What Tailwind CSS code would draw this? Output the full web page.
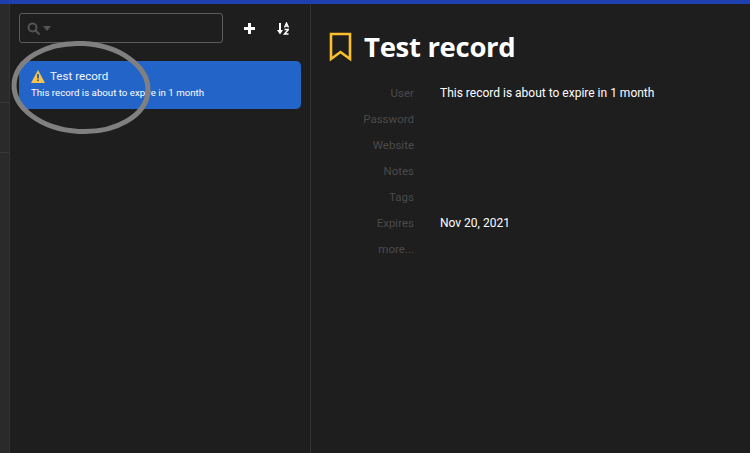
<!DOCTYPE html>
<html lang="en">
<head>
  <meta charset="UTF-8"/>
  <title>Test record</title>
  <script src="https://cdn.jsdelivr.net/npm/@tailwindcss/browser@4"></script>
</head>
<body class="w-[750px] h-[453px] overflow-hidden bg-[#1e1e1e] font-['Roboto',sans-serif] text-white relative">
  <div class="h-1 bg-[#1e40af]"></div>
  <div class="flex h-[449px]">
    <!-- left rail -->
    <div class="w-[10px] shrink-0 bg-[#2a2a2a] border-r border-[#333] flex flex-col">
      <div class="h-[50px] mt-[49px] border-b border-[#383838]"></div>
      <div class="h-[50px] border-b border-[#383838]"></div>
    </div>
    <!-- list column -->
    <div class="w-[301px] shrink-0 border-r border-[#333] pl-[9px] pr-[9px] pt-[9px]">
      <div class="flex items-center">
        <div class="w-[204px] h-[30px] rounded-[3px] border border-[#5c5c5c] flex items-center pl-[7px] gap-[3px]">
          <svg class="w-[13px] h-[13px] text-[#555]" viewBox="0 0 13 13" fill="none" stroke="currentColor" stroke-width="2"><circle cx="5.5" cy="5.5" r="4"/><path d="M8.5 8.5l4 4"/></svg>
          <svg class="w-[8px] h-[5px] text-[#555]" viewBox="0 0 8 5" fill="currentColor"><path d="M0 0h8L4 5z"/></svg>
        </div>
        <svg class="ml-[20px] w-[13px] h-[13px]" viewBox="0 0 13 13" fill="white"><path d="M5 1h3v4h4v3H8v4H5V8H1V5h4z"/></svg>
        <div class="ml-[21px] flex items-center">
          <svg class="w-[12px] h-[13px]" viewBox="0 0 12 13" fill="none" stroke="white"><path d="M3 1v9" stroke-width="2"/><path d="M0 8l3 4.500L6 8z" fill="white" stroke="none"/><path d="M7.500 5.500L9.500 1l2 4.500M8.300 4h2.400" stroke-width="1.300"/><path d="M7.500 7.500h4l-4 4.500h4" stroke-width="1.500"/></svg>
        </div>
      </div>
      <div class="mt-[18px] h-[48px] rounded-[5px] bg-[#2364c8] pl-[12px] pt-[7px]">
        <div class="flex items-center gap-[5px] h-[17px]">
          <svg class="w-[14px] h-[13px]" viewBox="0 0 14 13"><path d="M7 0L14 13H0z" fill="#f6c350"/><path d="M6.200 4h1.600v4.500H6.200zM6.200 9.500h1.600v1.600H6.200z" fill="#1d4f9c"/></svg>
          <span class="text-[11.6px] leading-[17px] text-[#f2f5fb]">Test record</span>
        </div>
        <div class="text-[9.7px] leading-[15px] text-white whitespace-nowrap">This record is about to expire in 1 month</div>
      </div>
    </div>
    <!-- detail -->
    <div class="flex-1 pl-[18px] pt-[23px]">
      <div class="flex items-center h-[40px]">
        <svg class="w-[23px] h-[30px]" viewBox="0 0 23 30" fill="none" stroke="#fbbf2d" stroke-width="2.600"><path d="M2 2h19v25l-9.500-7L2 27z"/></svg>
        <h1 class="ml-[12px] font-['Open_Sans',sans-serif] text-[27.5px] leading-[40px] font-bold tracking-[-0.3px]">Test record</h1>
      </div>
      <dl class="mt-[13px] grid grid-cols-[85px_1fr] gap-x-[26px] auto-rows-[26px] text-[12px] leading-[26px]">
        <dt class="text-right text-[11.5px] text-[#4a4a4a]">User</dt><dd class="whitespace-nowrap">This record is about to expire in 1 month</dd>
        <dt class="text-right text-[11.5px] text-[#4a4a4a]">Password</dt><dd></dd>
        <dt class="text-right text-[11.5px] text-[#4a4a4a]">Website</dt><dd></dd>
        <dt class="text-right text-[11.5px] text-[#4a4a4a]">Notes</dt><dd></dd>
        <dt class="text-right text-[11.5px] text-[#4a4a4a]">Tags</dt><dd></dd>
        <dt class="text-right text-[11.5px] text-[#4a4a4a]">Expires</dt><dd>Nov 20, 2021</dd>
        <dt class="text-right text-[11.5px] text-[#4a4a4a]">more...</dt><dd></dd>
      </dl>
    </div>
  </div>
  <!-- hand-drawn annotation ring -->
  <svg class="absolute left-0 top-0 w-[160px] h-[145px] pointer-events-none" viewBox="0 0 160 145" fill="none"><ellipse cx="81" cy="87.500" rx="67" ry="44" stroke="#808080" stroke-width="5" transform="rotate(3 81 87.500)"/></svg>
</body>
</html>
